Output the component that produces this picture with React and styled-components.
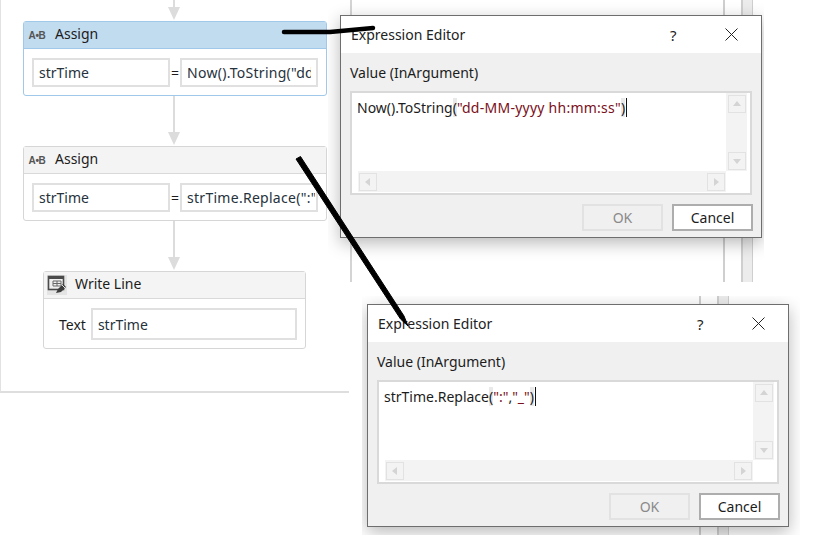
import React from 'react'
import styled, { createGlobalStyle } from 'styled-components'

const GlobalStyle = createGlobalStyle`
  html, body {
    margin: 0;
    padding: 0;
    background: #fff;
  }
  body {
    font-family: "Noto Sans", "Open Sans", sans-serif;
    color: #1c1c1c;
  }
`

const Stage = styled.div`
  position: relative;
  width: 833px;
  height: 547px;
  overflow: hidden;
  background: #fff;
`

const Canvas = styled.div`
  box-sizing: border-box;
  width: 349px;
  height: 393px;
  border-left: 1px solid #e2e2e2;
  border-bottom: 2px solid #dedede;
  display: flex;
  flex-direction: column;
  align-items: center;
`

const Connector = styled.div`
  height: ${p => p.$height}px;
  display: flex;
  flex-direction: column;
  align-items: center;
  flex: none;
  margin-right: 2px;
`

const ConnectorLine = styled.div`
  flex: 1;
  width: 2px;
  background: #dcdcdc;
`

const ConnectorArrow = styled.div`
  width: 0;
  height: 0;
  border-left: 6px solid transparent;
  border-right: 6px solid transparent;
  border-top: 13px solid #dcdcdc;
  margin-bottom: 1px;
`

const Card = styled.div`
  box-sizing: border-box;
  flex: none;
  width: ${p => p.$width}px;
  height: ${p => p.$height}px;
  margin-right: ${p => p.$nudge || 0}px;
  border: 1px solid ${p => (p.$selected ? '#a0c8e8' : '#d6d6d6')};
  border-radius: 3px;
  background: #fff;
  display: flex;
  flex-direction: column;
`

const CardHeader = styled.div`
  box-sizing: border-box;
  height: 27px;
  flex: none;
  display: flex;
  align-items: center;
  gap: ${p => (p.$wide ? 8 : 9)}px;
  padding-left: ${p => (p.$wide ? 3 : 4)}px;
  background: ${p => (p.$selected ? '#c1dbef' : '#f4f4f4')};
  border-bottom: 1px solid ${p => (p.$selected ? '#a0c8e8' : '#d9d9d9')};
  font-size: 14px;
`

const CardTitle = styled.span`
  margin-bottom: 3px;
`

const AssignIcon = styled.span`
  width: 18px;
  font-family: "Liberation Sans", sans-serif;
  font-size: 10px;
  font-weight: 700;
  letter-spacing: -0.3px;
  color: #555;
  text-align: center;
`

const AssignBody = styled.div`
  display: flex;
  align-items: center;
  padding: 9px 8px 0;
`

const InputBox = styled.div`
  box-sizing: border-box;
  width: ${p => p.$width}px;
  height: ${p => p.$height}px;
  flex: none;
  display: flex;
  align-items: center;
  padding: 0 ${p => (p.$tight ? 1 : 5)}px 0 5px;
  border: 2px solid #e0e0e0;
  font-size: 14px;
  letter-spacing: ${p => (p.$value ? 0.28 : 0)}px;
  color: #26323c;
`

const InputText = styled.span`
  overflow: hidden;
  white-space: nowrap;
`

const Equals = styled.span`
  width: 10px;
  flex: none;
  text-align: center;
  font-size: 14px;
`

const WriteBody = styled.div`
  display: flex;
  align-items: center;
  gap: 5px;
  padding: 9px 8px 0 15px;
  font-size: 14px;
`

// screenshot pasted on top of the designer, with its own background rules
const Shot = styled.div`
  position: absolute;
  left: ${p => p.$left}px;
  top: ${p => p.$top}px;
  width: ${p => p.$width}px;
  height: ${p => p.$height}px;
  padding: ${p => p.$pad};
  box-sizing: border-box;
  overflow: hidden;
  background: ${p => p.$rules};
`

const Dialog = styled.div`
  box-sizing: border-box;
  width: 422px;
  height: 223px;
  border: 1px solid #6e6e6e;
  background: #f0f0f0;
  box-shadow: 0 5px 16px rgba(0, 0, 0, 0.28);
  display: flex;
  flex-direction: column;
`

const TitleBar = styled.div`
  box-sizing: border-box;
  height: 37px;
  flex: none;
  background: #fff;
  display: flex;
  align-items: center;
  padding: 0 23px 0 10px;
  font-size: 14px;
  color: #222;
`

const TitleText = styled.span`
  flex: 1;
`

const HelpMark = styled.span`
  width: 55px;
  font-size: 15px;
`

const DialogBody = styled.div`
  flex: 1;
  display: flex;
  flex-direction: column;
  padding: 9px 9px 6px 9px;
`

const FieldLabel = styled.div`
  height: 28px;
  padding-top: 1px;
  font-size: 14px;
  line-height: 20px;
`

const Editor = styled.div`
  box-sizing: border-box;
  width: 402px;
  height: 104px;
  border: 2px solid #d9d9d9;
  background: #fff;
  display: grid;
  grid-template-columns: 1fr 21px;
  grid-template-rows: 1fr 21px;
  padding-right: 3px;
  padding-bottom: 1px;
`

const CodeLine = styled.div`
  padding: 5px 0 0 5px;
  font-size: 14px;
  line-height: 20px;
  white-space: pre;
  color: #1c1c1c;
`

const Str = styled.span`
  color: #7a1020;
  letter-spacing: ${p => p.$spread || 0}px;
`

const Brace = styled.span`
  background: #e9e9e9;
`

const Caret = styled.span`
  display: inline-block;
  width: 1px;
  height: 19px;
  margin-left: 1px;
  vertical-align: -4px;
  background: #111;
`

const VScroll = styled.div`
  background: #f3f3f3;
  display: flex;
  flex-direction: column;
  justify-content: space-between;
  align-items: center;
  padding: 2px 0 1px;
`

const HScroll = styled.div`
  margin-left: 6px;
  background: #f3f3f3;
  display: flex;
  justify-content: space-between;
  align-items: center;
  padding: 0 1px;
`

const ScrollButton = styled.div`
  box-sizing: border-box;
  width: 18px;
  height: 18px;
  border: 1px solid #e2e2e2;
  display: flex;
  align-items: center;
  justify-content: center;
`

const Corner = styled.div`
  background: #fff;
`

const ButtonRow = styled.div`
  display: flex;
  justify-content: flex-end;
  gap: 9px;
  margin-top: 9px;
  margin-right: -1px;
`

const Button = styled.div`
  box-sizing: border-box;
  width: 81px;
  height: 27px;
  display: flex;
  align-items: center;
  justify-content: center;
  font-size: 14px;
  border: 2px solid ${p => (p.$disabled ? '#e2e2e2' : '#adadad')};
  background: ${p => (p.$disabled ? '#f0f0f0' : '#fff')};
  color: ${p => (p.$disabled ? '#8a8a8a' : '#1c1c1c')};
`

const Annotations = styled.svg`
  position: absolute;
  left: 0;
  top: 0;
  pointer-events: none;
`

const Arrow = ({ dir }) => {
  const points = {
    up: '5,2 1,7 9,7',
    down: '1,3 9,3 5,8',
    left: '7,1 7,9 2,5',
    right: '3,1 3,9 8,5',
  }[dir]
  return (
    <svg width="10" height="10" viewBox="0 0 10 10">
      <polygon points={points} fill="#d4d4d4" />
    </svg>
  )
}

const CloseIcon = () => (
  <svg width="13" height="13" viewBox="0 0 13 13">
    <path d="M0.5 0.5 L12.5 12.5 M12.5 0.5 L0.5 12.5" stroke="#222" strokeWidth="1" fill="none" />
  </svg>
)

const WriteLineIcon = () => (
  <svg width="20" height="20" viewBox="0 0 20 20">
    <rect width="20" height="20" fill="#e4e4e4" />
    <rect x="1.5" y="1.5" width="15" height="13" fill="#f0f0f0" stroke="#4a4a4a" strokeWidth="1.6" />
    <rect x="1" y="1" width="16" height="3" fill="#4a4a4a" />
    <path d="M6 6 H14 V11 H6 Z M10 6 V11 M6 8.5 H14" stroke="#6a6a6a" fill="none" />
    <path d="M9 18 L11 14 L16 9 L19 12 L14 17 Z" fill="#3c3c3c" />
    <path d="M15 10 L18 13" stroke="#e4e4e4" />
  </svg>
)

const Connect = ({ height }) => (
  <Connector $height={height}>
    <ConnectorLine />
    <ConnectorArrow />
  </Connector>
)

const AssignCard = ({ selected, to, value, tight }) => (
  <Card $width={304} $height={75} $selected={selected}>
    <CardHeader $selected={selected}>
      <AssignIcon>A•B</AssignIcon>
      <CardTitle>Assign</CardTitle>
    </CardHeader>
    <AssignBody>
      <InputBox $width={138} $height={29}><InputText>{to}</InputText></InputBox>
      <Equals>=</Equals>
      <InputBox $width={138} $height={29} $value $tight={tight}><InputText>{value}</InputText></InputBox>
    </AssignBody>
  </Card>
)

const ExpressionDialog = ({ children }) => (
  <Dialog>
    <TitleBar>
      <TitleText>Expression Editor</TitleText>
      <HelpMark>?</HelpMark>
      <CloseIcon />
    </TitleBar>
    <DialogBody>
      <FieldLabel>Value (InArgument)</FieldLabel>
      <Editor>
        <CodeLine>{children}<Caret /></CodeLine>
        <VScroll>
          <ScrollButton><Arrow dir="up" /></ScrollButton>
          <ScrollButton><Arrow dir="down" /></ScrollButton>
        </VScroll>
        <HScroll>
          <ScrollButton><Arrow dir="left" /></ScrollButton>
          <ScrollButton><Arrow dir="right" /></ScrollButton>
        </HScroll>
        <Corner />
      </Editor>
      <ButtonRow>
        <Button $disabled>OK</Button>
        <Button>Cancel</Button>
      </ButtonRow>
    </DialogBody>
  </Dialog>
)

const rules = list =>
  list.map(([x, w, c]) => `linear-gradient(${c}, ${c}) ${x}px 0 / ${w}px 100% no-repeat`).join(', ') + ', #fff'

const firstRules = rules([
  [22, 2, '#d4d4d4'],
  [395, 2, '#cfcfcf'],
  [413, 2, '#cfcfcf'],
  [424, 1, '#cfcfcf'],
  [415, 9, '#ececec'],
])

const secondRules = rules([
  [337, 2, '#cfcfcf'],
  [355, 2, '#cfcfcf'],
  [366, 1, '#cfcfcf'],
  [357, 9, '#ececec'],
])

export default function App() {
  return (
    <Stage>
      <GlobalStyle />
      <Canvas>
        <Connect height={21} />
        <AssignCard selected to="strTime" value={'Now().ToString("dd-MM-yyyy'} />
        <Connect height={50} />
        <AssignCard tight to="strTime" value={'strTime.Replace(":","_")'} />
        <Connect height={50} />
        <Card $width={263} $height={78} $nudge={1}>
          <CardHeader $wide>
            <WriteLineIcon />
            <CardTitle>Write Line</CardTitle>
          </CardHeader>
          <WriteBody>
            Text
            <InputBox $width={206} $height={32}><InputText>strTime</InputText></InputBox>
          </WriteBody>
        </Card>
      </Canvas>

      <Shot $left={328} $top={0} $width={436} $height={282} $pad="15px 0 0 12px" $rules={firstRules}>
        <ExpressionDialog>
          Now().ToString<Brace>(</Brace><Str $spread={0.25}>"dd-MM-yyyy hh:mm:ss"</Str><Brace>)</Brace>
        </ExpressionDialog>
      </Shot>

      <Shot $left={362} $top={296} $width={438} $height={239} $pad="8px 0 0 5px" $rules={secondRules}>
        <ExpressionDialog>
          strTime.Replace<Brace>(</Brace><Str>":"</Str>,<Str>"_"</Str><Brace>)</Brace>
        </ExpressionDialog>
      </Shot>

      <Annotations width="833" height="547" viewBox="0 0 833 547">
        <path d="M284 32 L330 32 L373 28" stroke="#000" strokeWidth="4.5" strokeLinecap="round" strokeLinejoin="round" fill="none" />
        <polygon points="296,159 300.5,156.5 404,316 408,326 400.5,319" fill="#000" stroke="#000" strokeWidth="1" strokeLinejoin="round" />
      </Annotations>
    </Stage>
  )
}
